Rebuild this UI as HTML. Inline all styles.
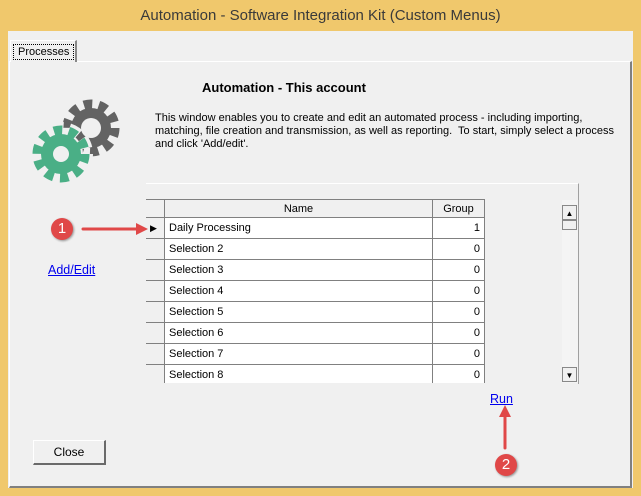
<!DOCTYPE html>
<html><head><style>
body{margin:0;width:641px;height:496px;overflow:hidden;background:#f0c86c;font-family:"Liberation Sans",sans-serif;font-size:11px;position:relative}
.a{position:absolute}
.client{left:8px;top:31px;width:625px;height:457px;background:#f0f0f0}
.title{left:0;top:7px;width:641px;text-align:center;font-size:15px;color:#3a3a3a}
.tab{left:10px;top:40px;width:64px;height:21px;background:#f0f0f0;border-top:1px solid #fff;border-left:1px solid #fff;border-right:2px solid #888;}
.tab span{position:absolute;left:2px;top:3px;border:1px dotted #000;padding:0 4px;line-height:14px}
.panel{left:9px;top:61px;width:620px;height:424px;border-top:1px solid #fff;border-left:1px solid #fff;border-right:2px solid #808080;border-bottom:2px solid #808080}
.grid{left:146px;top:183px;width:432px;height:200px;background:#f0f0f0;border-top:1px solid #fff;border-right:1px solid #a0a0a0}
.clip{left:146px;top:199px;width:340px;height:184px;overflow:hidden}
table{border-collapse:collapse;position:absolute;left:0;top:0}
td{border:1px solid #808080;height:20px;padding:0 4px;font-size:11px;white-space:nowrap}
.rh{width:10px;background:#f0f0f0;border-left:none}
.nm{width:259px;background:#fff}
.gp{width:43px;background:#fff;text-align:right}
.hd td{background:#f0f0f0;height:17px;text-align:center}
a{color:#0000ee;text-decoration:underline;font-size:12.5px}
.btn{left:33px;top:440px;width:70px;height:22px;background:#f0f0f0;border-top:1px solid #fff;border-left:1px solid #fff;border-right:2px solid #6a6a6a;border-bottom:2px solid #6a6a6a;text-align:center;line-height:22px;font-size:12px}
.badge{width:22px;height:22px;border-radius:50%;background:#e04848;color:#fff;font-size:15px;text-align:center;line-height:22px;box-shadow:1px 1px 2px rgba(0,0,0,.4)}
</style></head><body>
<div class="a title">Automation - Software Integration Kit (Custom Menus)</div>
<div class="a client"></div>
<div class="a panel"></div>
<div class="a tab"><span>Processes</span></div>
<div class="a" style="left:202px;top:80px;font-size:13px;font-weight:bold">Automation - This account</div>
<div class="a" style="left:155px;top:112px;width:470px;line-height:13px;font-size:11px">This window enables you to create and edit an automated process - including importing, matching, file creation and transmission, as well as reporting.&nbsp; To start, simply select a process and click 'Add/edit'.</div>
<svg class="a" style="left:25px;top:95px" width="110" height="100">
<g transform="translate(66,33)"><circle r="20" fill="#636363"/><circle r="24" fill="none" stroke="#636363" stroke-width="9" stroke-dasharray="8.5 6.6"/><circle r="10" fill="#f0f0f0"/></g>
<g transform="translate(36,59)"><circle r="25" fill="none" stroke="#f0f0f0" stroke-width="14" stroke-dasharray="10 5.7"/><circle r="22" fill="#f0f0f0"/><circle r="20" fill="#4aaf86"/><circle r="24" fill="none" stroke="#4aaf86" stroke-width="9" stroke-dasharray="8.5 6.6"/><circle r="8" fill="#f0f0f0"/></g>
</svg>
<div class="a grid"></div>
<div class="a clip"><table>
<tr class="hd"><td class="rh"></td><td class="nm" style="background:#f0f0f0">Name</td><td class="gp" style="background:#f0f0f0;text-align:center">Group</td></tr>
<tr><td class="rh" style="font-size:9px">&#9654;</td><td class="nm">Daily Processing</td><td class="gp">1</td></tr>
<tr><td class="rh"></td><td class="nm">Selection 2</td><td class="gp">0</td></tr>
<tr><td class="rh"></td><td class="nm">Selection 3</td><td class="gp">0</td></tr>
<tr><td class="rh"></td><td class="nm">Selection 4</td><td class="gp">0</td></tr>
<tr><td class="rh"></td><td class="nm">Selection 5</td><td class="gp">0</td></tr>
<tr><td class="rh"></td><td class="nm">Selection 6</td><td class="gp">0</td></tr>
<tr><td class="rh"></td><td class="nm">Selection 7</td><td class="gp">0</td></tr>
<tr><td class="rh"></td><td class="nm">Selection 8</td><td class="gp">0</td></tr>
</table></div>
<div class="a" style="left:562px;top:200px;width:16px;height:183px;background:#f4f4f4"></div>
<div class="a" style="left:562px;top:205px;width:15px;height:15px;background:#f0f0f0;border:1px solid #888;font-size:8px;text-align:center;line-height:15px;box-sizing:border-box">&#9650;</div>
<div class="a" style="left:562px;top:220px;width:15px;height:10px;background:#f0f0f0;border:1px solid #888;box-sizing:border-box"></div>
<div class="a" style="left:562px;top:367px;width:15px;height:15px;background:#f0f0f0;border:1px solid #888;font-size:8px;text-align:center;line-height:15px;box-sizing:border-box">&#9660;</div>
<a class="a" style="left:48px;top:263px">Add/Edit</a>
<a class="a" style="left:490px;top:392px">Run</a>
<div class="a btn">Close</div>
<div class="a badge" style="left:51px;top:218px">1</div>
<svg class="a" style="left:80px;top:222px" width="70" height="14"><line x1="3" y1="7" x2="58" y2="7" stroke="#e04848" stroke-width="3" stroke-linecap="round"/><polygon points="56,1 68,7 56,13" fill="#e04848"/></svg>
<div class="a badge" style="left:495px;top:454px">2</div>
<svg class="a" style="left:498px;top:405px" width="14" height="46"><line x1="7" y1="10" x2="7" y2="43" stroke="#e04848" stroke-width="3" stroke-linecap="round"/><polygon points="1,12 7,0 13,12" fill="#e04848"/></svg>
</body></html>
